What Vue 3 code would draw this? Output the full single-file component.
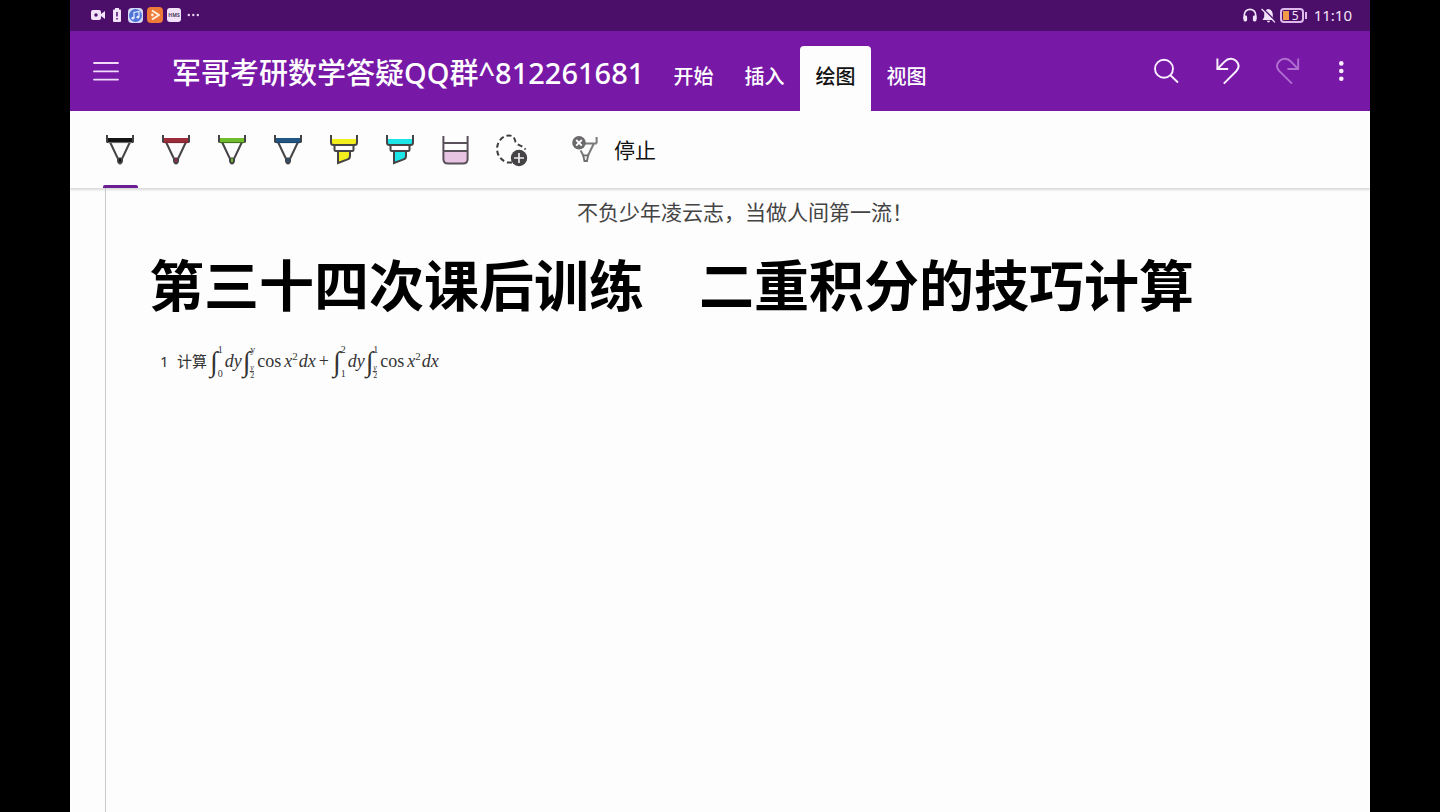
<template>
  <div class="device">
    <div class="screen">
      <div class="status-bar">
        <div class="status-group">
          <svg width="16" height="14" viewBox="0 0 16 14">
            <rect x="1" y="2" width="10" height="10" rx="2" fill="#f3e3fa" />
            <path d="M11 6 L15 3 V11 L11 8 Z" fill="#f3e3fa" />
            <circle cx="6" cy="7" r="1.7" fill="#4b0f69" />
          </svg>
          <svg class="gap-s" width="10" height="14" viewBox="0 0 10 14">
            <path d="M3 0 H7 V1.5 H8.2 Q9 1.5 9 2.5 V13 Q9 14 8 14 H2 Q1 14 1 13 V2.5 Q1 1.5 1.8 1.5 H3 Z" fill="#f3e3fa" />
            <path d="M5 4 V8.5 M5 10 V11.6" stroke="#4b0f69" stroke-width="1.5" />
          </svg>
          <svg width="15" height="15" viewBox="0 0 15 15">
            <rect width="15" height="15" rx="4" fill="#d5daf8" />
            <circle cx="7.5" cy="7.5" r="6.4" fill="#4f74d8" />
            <path d="M6 10 V4.5 L11 3.5 V9" fill="none" stroke="#e6ecff" stroke-width="1.2" />
            <circle cx="4.9" cy="10.2" r="1.4" fill="#e6ecff" />
            <circle cx="9.9" cy="9.2" r="1.4" fill="#e6ecff" />
          </svg>
          <svg width="16" height="16" viewBox="0 0 16 16">
            <rect width="16" height="16" rx="4" fill="#ee7a3a" />
            <path d="M5 3.5 L12 8 L5 12.5" fill="none" stroke="#fff0e2" stroke-width="2" stroke-linejoin="round" />
            <circle cx="5.4" cy="8" r="1.4" fill="#fff0e2" />
          </svg>
          <span class="hms">HMS</span>
          <svg class="gap-s" width="13" height="4" viewBox="0 0 13 4" fill="#e8d2f3">
            <circle cx="1.8" cy="2" r="1.2" />
            <circle cx="6.3" cy="2" r="1.2" />
            <circle cx="10.8" cy="2" r="1.2" />
          </svg>
        </div>
        <div class="status-group">
          <svg width="14" height="14" viewBox="0 0 14 14">
            <path d="M1.3 11 V7 A5.7 5.7 0 0 1 12.7 7 V11" fill="none" stroke="#f3e3fa" stroke-width="1.7" />
            <rect x="0.5" y="7.5" width="3.6" height="6" rx="1.4" fill="#f3e3fa" />
            <rect x="9.9" y="7.5" width="3.6" height="6" rx="1.4" fill="#f3e3fa" />
          </svg>
          <svg width="15" height="15" viewBox="0 0 15 15">
            <path d="M7.5 1 Q11.5 1.6 11.8 6 V9 L13.5 12 H1.5 L3.2 9 V6 Q3.5 1.6 7.5 1 Z" fill="#f3e3fa" />
            <path d="M5.8 12.8 H9.2 Q8.8 14.4 7.5 14.4 Q6.2 14.4 5.8 12.8 Z" fill="#f3e3fa" />
            <path d="M2 0.6 L15 13.4" stroke="#4b0f69" stroke-width="1.4" />
            <path d="M0.6 1 L14 14.4" stroke="#f3e3fa" stroke-width="1.3" />
          </svg>
          <span class="battery"><i class="charge"></i>5</span>
          <span class="clock">11:10</span>
        </div>
      </div>

      <header class="app-bar">
        <button class="menu-btn" aria-label="菜单">
          <svg width="28" height="24" viewBox="0 0 28 24" stroke="#f0d9fb" stroke-width="1.8" stroke-linecap="round">
            <path d="M2 4 H26 M2 12.4 H26 M2 20.6 H26" />
          </svg>
        </button>
        <h1 class="title">军哥考研数学答疑QQ群^812261681</h1>
        <nav class="tabs">
          <button
            v-for="tab in tabs"
            :key="tab"
            class="tab"
            :class="{ active: tab === activeTab }"
            @click="activeTab = tab"
          >{{ tab }}</button>
        </nav>
        <div class="actions">
          <button class="action" aria-label="搜索">
            <svg width="32" height="32" viewBox="0 0 32 32" fill="none" stroke="#fbeeff" stroke-width="1.9">
              <circle cx="14" cy="13.8" r="9" />
              <path d="M20.4 20.3 L28 27.5" />
            </svg>
          </button>
          <button class="action" aria-label="撤消">
            <svg width="32" height="32" viewBox="0 0 32 32" fill="none" stroke="#fbeeff" stroke-width="2">
              <path d="M6.4 3.4 V14 H17.2" />
              <path d="M6.4 14 L13.6 6.6 C17.1 3 22.2 2.9 25.2 6 C28.4 9.3 28.2 13 25.2 16.2 L12.8 28.6" />
            </svg>
          </button>
          <button class="action" aria-label="恢复" disabled>
            <svg width="32" height="32" viewBox="0 0 32 32" fill="none" stroke="#b06fd0" stroke-width="1.9">
              <path d="M26.2 3.4 V14 H15.4" />
              <path d="M26.2 14 L19 6.6 C15.5 3 10.4 2.9 7.4 6 C4.2 9.3 4.4 13 7.4 16.2 L20 28.6" />
            </svg>
          </button>
          <button class="action more" aria-label="更多">
            <svg width="8" height="24" viewBox="0 0 8 24" fill="#fbeeff">
              <circle cx="4.3" cy="4.4" r="2.3" />
              <circle cx="4.3" cy="12" r="2.3" />
              <circle cx="4.3" cy="19.7" r="2.3" />
            </svg>
          </button>
        </div>
      </header>

      <div class="toolbar">
        <button
          v-for="(pen, i) in pens"
          :key="pen.name"
          class="tool"
          :class="{ selected: i === activeTool }"
          :aria-label="pen.name"
          @click="activeTool = i"
        >
          <svg width="30" height="32" viewBox="0 0 30 32" fill="none" stroke="#454345" stroke-width="2">
            <template v-if="pen.kind === 'pen'">
              <path d="M5 8 L12.6 24 M25 8 L17.4 24" />
              <path d="M12 23.5 H18 V27 Q17.4 30.4 15 30.4 Q12.6 30.4 12 27 Z" fill="#454345" stroke="none" />
              <path d="M15 24.5 V28" :stroke="pen.color" />
              <rect x="2" y="4" width="26" height="5" :fill="pen.color" stroke="none" />
              <path d="M3 8.6 H27" :stroke="pen.edge" stroke-width="1" />
              <path d="M2 1 V8.5 M28 1 V8.5" />
            </template>
            <template v-else>
              <rect x="3" y="5" width="24" height="5.5" :fill="pen.color" stroke="none" />
              <path d="M2 1 V8.5 Q2 11 4.5 11 H25.5 Q28 11 28 8.5 V1" />
              <path d="M5.5 11 V15.5 Q5.5 17 7 17 H23 Q24.5 17 24.5 15.5 V11" />
              <path d="M9 17 V29 L18.6 25.4 Q21 24.5 21 22 V17 Z" :fill="pen.color" />
            </template>
          </svg>
        </button>
        <button class="tool" aria-label="橡皮擦">
          <svg width="30" height="32" viewBox="0 0 30 32" fill="none" stroke="#59515a" stroke-width="2">
            <path d="M2.4 17 H26.6 V25 Q26.6 29.5 22 29.5 H7 Q2.4 29.5 2.4 25 Z" fill="#e7c5e2" stroke="none" />
            <path d="M2.4 2 V25 Q2.4 29.5 7 29.5 H22 Q26.6 29.5 26.6 25 V2 M2.4 9 H26.6 M2.4 17 H26.6" />
          </svg>
        </button>
        <button class="tool" aria-label="套索选择">
          <svg width="34" height="34" viewBox="0 0 34 34">
            <path
              d="M17 29.5 H13 C6 28 2 22 2 15.5 C2.4 8 8 2.6 14 2.4 C18.5 2.6 19.5 5 20.4 8.5 C22 13 28 12 30.5 16.5"
              fill="none" stroke="#3f3d3f" stroke-width="2" stroke-dasharray="5 3"
            />
            <circle cx="24" cy="25" r="8.2" fill="#454345" />
            <path d="M24 20 V30 M19 25 H29" stroke="#ececec" stroke-width="1.7" />
          </svg>
        </button>
        <button class="stop">
          <svg width="28" height="28" viewBox="0 0 28 28">
            <path d="M14 7.5 H25.6 M25.6 1 V7.5 M22.6 8 L16.8 20 M9.6 14.5 L12.6 20" fill="none" stroke="#7b797b" stroke-width="2" />
            <path d="M12.2 19.4 H17.2 L16 25 H13.4 Z" fill="#e9e9e9" stroke="#6f6d6f" stroke-width="1.8" />
            <circle cx="8" cy="6.8" r="6.8" fill="#6b696b" />
            <path d="M5.2 4 L10.8 9.6 M10.8 4 L5.2 9.6" stroke="#fff" stroke-width="1.8" />
          </svg>
          <span>停止</span>
        </button>
      </div>

      <main class="canvas">
        <article class="note">
          <p class="motto">不负少年凌云志，当做人间第一流！</p>
          <h2 class="heading">第三十四次课后训练　二重积分的技巧计算</h2>
          <div class="problem">
            <span class="num">1</span>
            <span class="verb">计算</span>
            <template v-for="(term, i) in terms" :key="i">
              <span v-if="i > 0" class="plus">+</span>
              <span class="integral">
                <span class="sign">∫</span>
                <span class="limits"><span>{{ term.outer[1] }}</span><span>{{ term.outer[0] }}</span></span>
              </span>
              <i class="diff">dy</i>
              <span class="integral">
                <span class="sign">∫</span>
                <span class="limits inner">
                  <span>{{ term.inner }}</span>
                  <span class="frac"><i>y</i><span>2</span></span>
                </span>
              </span>
              <span>cos</span>
              <i class="var">x</i><span class="exp">2</span><i>dx</i>
            </template>
          </div>
        </article>
      </main>
    </div>
  </div>
</template>

<script setup>
import { ref } from 'vue'

const tabs = ['开始', '插入', '绘图', '视图']
const activeTab = ref('绘图')

const pens = [
  { name: '黑色笔', kind: 'pen', color: '#151515', edge: '#777' },
  { name: '红色笔', kind: 'pen', color: '#9b2d3a', edge: '#7c2631' },
  { name: '绿色笔', kind: 'pen', color: '#6fbd2c', edge: '#3c6b18' },
  { name: '蓝色笔', kind: 'pen', color: '#215684', edge: '#1a4468' },
  { name: '黄色荧光笔', kind: 'marker', color: '#f2ee1d' },
  { name: '青色荧光笔', kind: 'marker', color: '#1ce5e8' },
]
const activeTool = ref(0)

// outer: [lower, upper]; every inner integral starts at y/2
const terms = [
  { outer: ['0', '1'], inner: 'y' },
  { outer: ['1', '2'], inner: '1' },
]
</script>

<style>
body { margin:0; background:#000; }
</style>

<style scoped>
.device {
  box-sizing:border-box; min-height:100vh; padding:0 70px; background:#000;
  display:flex; font-family:"Noto Sans","Noto Sans CJK SC",sans-serif;
}
.screen { flex:1; min-width:0; display:flex; flex-direction:column; background:#fdfdfd; }
button { border:0; padding:0; background:none; font-family:inherit; cursor:pointer; }
svg { display:block; flex-shrink:0; }

.status-bar {
  height:31px; box-sizing:border-box; padding:0 18px 1px 20px; background:#4b0f69;
  display:flex; align-items:center; justify-content:space-between;
}
.status-group { display:flex; align-items:center; gap:4px; color:#f3e3fa; }
.gap-s { margin:0 2px; }
.hms {
  width:14px; height:14px; border-radius:3px; background:#f3e3fa; color:#4b3a58;
  font-size:5px; line-height:14px; font-weight:700; text-align:center;
}
.battery {
  position:relative; box-sizing:border-box; width:24px; height:15px; margin-right:6px; padding-right:3px;
  border:2px solid #ddb9ec; border-radius:4px; font-size:12px; line-height:11px;
  display:flex; justify-content:space-between;
}
.battery::after {
  content:""; position:absolute; right:-5px; top:2px; width:2px; height:7px; background:#ddb9ec;
}
.charge { width:6px; height:9px; margin:1px; background:#f09a4a; }
.clock { font-size:15px; line-height:20px; }

.app-bar { height:80px; display:flex; align-items:center; background:#7719a6; color:#fff; }
.menu-btn { width:72px; height:48px; display:flex; align-items:center; justify-content:center; }
.title {
  flex:0 0 486px; margin:0 0 0 30px; padding-top:3px;
  font-size:29px; line-height:40px; font-weight:500; white-space:nowrap;
}
.tabs { align-self:flex-end; display:flex; }
.tab { width:71px; height:65px; padding-bottom:4px; color:#fff; font-size:20px; line-height:30px; font-weight:500; border-radius:4px 4px 0 0; }
.tab.active { background:#fdfdfd; color:#111; }
.actions { margin-left:auto; padding-right:6px; display:flex; }
.action { width:61px; height:48px; display:flex; align-items:center; justify-content:center; }
.action.more { width:46px; }

.toolbar {
  height:77px; padding-left:22px; display:flex; align-items:stretch;
  background:#fdfdfd; box-shadow:0 2px 2px rgba(0,0,0,0.14);
}
.tool { position:relative; width:56px; display:flex; align-items:center; justify-content:center; }
.tool.selected::after {
  content:""; position:absolute; left:11px; right:10px; bottom:0; height:3px;
  background:#6c1f93; border-radius:2px 2px 0 0;
}
.stop { margin-left:31px; display:flex; align-items:center; gap:15px; color:#111; font-size:21px; line-height:30px; }

.canvas { flex:1; display:flex; padding-left:35px; }
.note { flex:1; min-width:0; border-left:1px solid #c9c7c9; }
.motto {
  margin:8px 0 0; padding-left:14px; text-align:center; color:#444; font-size:21px; line-height:30px;
  font-family:"Noto Sans CJK SC",serif; font-weight:400;
}
.heading {
  margin:16px 0 0 43px; color:#000; font-size:55px; line-height:80px; font-weight:700;
  font-family:"Noto Sans CJK SC",sans-serif; white-space:nowrap;
}
.problem {
  margin:17px 0 0 54px; height:44px; display:flex; align-items:center; color:#333;
  font-family:"Liberation Serif","Noto Sans CJK SC",serif; font-size:18px; line-height:24px;
}
.num { width:17px; font-family:"Noto Sans",sans-serif; font-size:15px; }
.verb { width:33px; font-family:"Noto Sans CJK SC",sans-serif; font-size:15px; }
.integral { display:flex; align-items:center; height:36px; padding-top:2px; }
.sign { font-size:28px; line-height:36px; }
.limits {
  height:34px; display:flex; flex-direction:column; justify-content:space-between;
  font-size:10px; line-height:10px;
}
.inner { min-width:7px; }
.frac { display:flex; flex-direction:column; align-items:flex-start; font-size:8px; line-height:7px; }
.frac i { border-bottom:1px solid #555; }
.diff { margin:0 1px 0 2px; }
.var { margin-left:3px; }
.exp { font-size:11px; line-height:12px; padding-bottom:10px; margin-right:1px; }
.plus { margin:0 4px 0 3px; }
</style>
